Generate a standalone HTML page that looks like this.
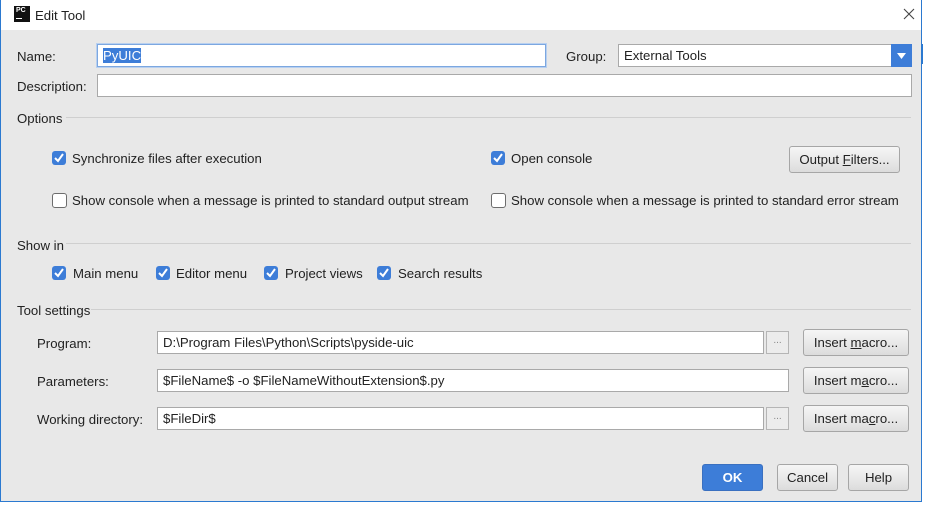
<!DOCTYPE html>
<html><head><style>
*{box-sizing:border-box;margin:0;padding:0}
body{width:927px;height:506px;background:#fff;font-family:"Liberation Sans",sans-serif;font-size:13.2px;color:#222;position:relative;overflow:hidden}
.a{position:absolute}
.win{left:0;top:0;width:922px;height:502px;border:1px solid #2b79d0;border-top:none;background:#e8e8e8}
.title{left:1px;top:0;width:920px;height:30px;background:#fff}
.lbl{position:absolute;line-height:16px;white-space:nowrap;margin-top:1px}
.inp{position:absolute;background:#fff;border:1px solid #a9a9a9;height:23px;padding-left:5px;line-height:22px;white-space:nowrap}
.btn{position:absolute;border:1px solid #a6a6a6;border-radius:3px;background:linear-gradient(#f6f6f6,#dcdcdc);text-align:center;line-height:26px;height:27px}
.cb{position:absolute;width:14px;height:14px;border-radius:3px;background:#3d7dd8}
.cb svg{position:absolute;left:2px;top:2px}
.cbe{position:absolute;width:15px;height:15px;border-radius:3px;background:#fff;border:1px solid #6d6d6d}
.sep{position:absolute;height:1px;background:#cfcfcf}
.dots{position:absolute;width:23px;height:23px;border:1px solid #b5b5b5;background:#ececec;text-align:center;line-height:18px;font-size:10px;color:#888}
</style></head><body>
<div class="a win"></div>
<div class="a title"></div>
<div class="a" style="left:14px;top:6px;width:16px;height:16px;background:#111;color:#fff;font-size:7px;font-weight:bold;line-height:9px;padding-left:2px">PC<div style="position:absolute;left:2px;top:12px;width:6px;height:1px;background:#fff"></div></div>
<div class="lbl" style="left:35px;top:7px">Edit Tool</div>
<svg class="a" style="left:903px;top:8px" width="12" height="12"><path d="M1 1L11 11M11 1L1 11" stroke="#444" stroke-width="1.1"/></svg>
<div class="a" style="left:922px;top:44px;width:3px;height:20px;border-left:1px solid #2b79d0"></div>

<div class="lbl" style="left:17px;top:48px">Name:</div>
<div class="inp" style="left:97px;top:44px;width:449px;border:1px solid #7ca7e0;box-shadow:0 0 0 1px #b8d0f0"><span style="background:#3d7dd8;color:#fff">PyUIC</span></div>
<div class="lbl" style="left:566px;top:48px">Group:</div>
<div class="inp" style="left:618px;top:44px;width:294px">External Tools</div>
<div class="a" style="left:891px;top:44px;width:21px;height:23px;background:#3d7dd8"><svg style="position:absolute;left:6px;top:9px" width="9" height="6"><path d="M0 0H9L4.5 6Z" fill="#fff"/></svg></div>
<div class="lbl" style="left:17px;top:78px">Description:</div>
<div class="inp" style="left:97px;top:74px;width:815px"></div>

<div class="lbl" style="left:17px;top:110px">Options</div>
<div class="sep" style="left:66px;top:117px;width:845px"></div>
<div class="cb" style="left:52px;top:151px"><svg width="10" height="10"><path d="M1 5L4 8L9 1" stroke="#fff" stroke-width="2" fill="none"/></svg></div>
<div class="lbl" style="left:72px;top:150px">Synchronize files after execution</div>
<div class="cb" style="left:491px;top:151px"><svg width="10" height="10"><path d="M1 5L4 8L9 1" stroke="#fff" stroke-width="2" fill="none"/></svg></div>
<div class="lbl" style="left:511px;top:150px">Open console</div>
<div class="btn" style="left:789px;top:146px;width:111px">Output <u>F</u>ilters...</div>
<div class="cbe" style="left:52px;top:193px"></div>
<div class="lbl" style="left:72px;top:192px">Show console when a message is printed to standard output stream</div>
<div class="cbe" style="left:491px;top:193px"></div>
<div class="lbl" style="left:511px;top:192px">Show console when a message is printed to standard error stream</div>

<div class="lbl" style="left:17px;top:237px">Show in</div>
<div class="sep" style="left:66px;top:243px;width:845px"></div>
<div class="cb" style="left:52px;top:266px"><svg width="10" height="10"><path d="M1 5L4 8L9 1" stroke="#fff" stroke-width="2" fill="none"/></svg></div>
<div class="lbl" style="left:73px;top:265px">Main menu</div>
<div class="cb" style="left:156px;top:266px"><svg width="10" height="10"><path d="M1 5L4 8L9 1" stroke="#fff" stroke-width="2" fill="none"/></svg></div>
<div class="lbl" style="left:176px;top:265px">Editor menu</div>
<div class="cb" style="left:264px;top:266px"><svg width="10" height="10"><path d="M1 5L4 8L9 1" stroke="#fff" stroke-width="2" fill="none"/></svg></div>
<div class="lbl" style="left:285px;top:265px">Project views</div>
<div class="cb" style="left:377px;top:266px"><svg width="10" height="10"><path d="M1 5L4 8L9 1" stroke="#fff" stroke-width="2" fill="none"/></svg></div>
<div class="lbl" style="left:398px;top:265px">Search results</div>

<div class="lbl" style="left:17px;top:302px">Tool settings</div>
<div class="sep" style="left:91px;top:309px;width:820px"></div>
<div class="lbl" style="left:37px;top:335px">Program:</div>
<div class="inp" style="left:157px;top:331px;width:607px">D:\Program Files\Python\Scripts\pyside-uic</div>
<div class="dots" style="left:766px;top:331px">...</div>
<div class="btn" style="left:803px;top:329px;width:106px">Insert <u>m</u>acro...</div>
<div class="lbl" style="left:37px;top:373px">Parameters:</div>
<div class="inp" style="left:157px;top:369px;width:632px">$FileName$ -o $FileNameWithoutExtension$.py</div>
<div class="btn" style="left:803px;top:367px;width:106px">Insert m<u>a</u>cro...</div>
<div class="lbl" style="left:37px;top:411px">Working directory:</div>
<div class="inp" style="left:157px;top:407px;width:607px">$FileDir$</div>
<div class="dots" style="left:766px;top:407px">...</div>
<div class="btn" style="left:803px;top:405px;width:106px">Insert ma<u>c</u>ro...</div>

<div class="btn" style="left:702px;top:464px;width:61px;background:#3d7dd8;border-color:#3a70c0;color:#fff;font-weight:bold">OK</div>
<div class="btn" style="left:777px;top:464px;width:61px">Cancel</div>
<div class="btn" style="left:848px;top:464px;width:61px">Help</div>
</body></html>
